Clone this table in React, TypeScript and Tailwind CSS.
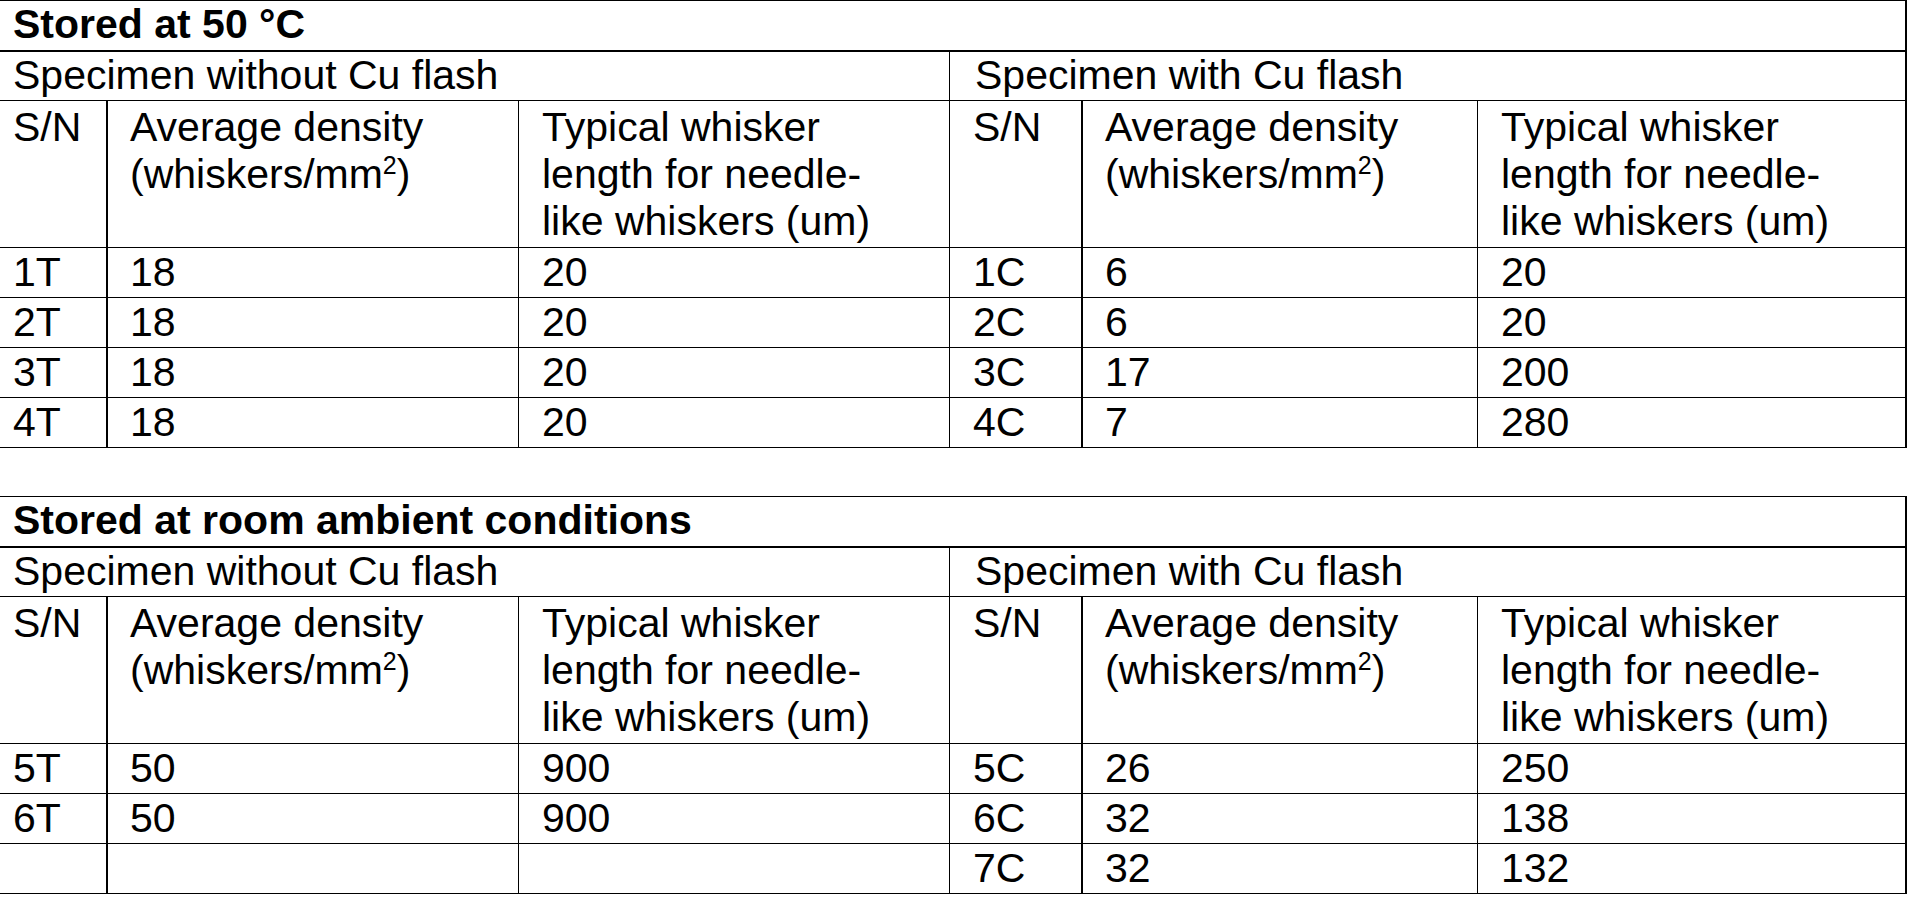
type Row = [string, string, string];

type TableData = {
  title: string;
  plain: Row[];
  flash: Row[];
};

const tables: TableData[] = [
  {
    title: "Stored at 50 °C",
    plain: [
      ["1T", "18", "20"],
      ["2T", "18", "20"],
      ["3T", "18", "20"],
      ["4T", "18", "20"],
    ],
    flash: [
      ["1C", "6", "20"],
      ["2C", "6", "20"],
      ["3C", "17", "200"],
      ["4C", "7", "280"],
    ],
  },
  {
    title: "Stored at room ambient conditions",
    plain: [
      ["5T", "50", "900"],
      ["6T", "50", "900"],
      ["", "", ""],
    ],
    flash: [
      ["5C", "26", "250"],
      ["6C", "32", "138"],
      ["7C", "32", "132"],
    ],
  },
];

// column widths + left borders, left group then right group
const cols = [
  "w-[106px] pl-[13px]",
  "w-[412px] pl-[22px] border-l-2 border-black",
  "w-[431px] pl-[23px] border-l border-black",
  "w-[132px] pl-[23px] border-l border-black",
  "w-[396px] pl-[22px] border-l-2 border-black",
  "w-[428px] pl-[23px] border-l border-black",
];

const HeaderCells = ({ offset }: { offset: number }) => (
  <>
    <div className={`${cols[offset]} h-full pt-[3px]`}>S/N</div>
    <div className={`${cols[offset + 1]} h-full pt-[3px]`}>
      Average density
      <br />
      (whiskers/mm<sup className="text-[25px] -top-[14px]">2</sup>)
    </div>
    <div className={`${cols[offset + 2]} h-full pt-[3px]`}>
      Typical whisker
      <br />
      length for needle-
      <br />
      like whiskers (um)
    </div>
  </>
);

function WhiskerTable({ data }: { data: TableData }) {
  const rows = data.plain.map((r, i) => [...r, ...data.flash[i]]);

  return (
    <div className="w-[1907px] border-t border-r-2 border-black">
      <div className="h-[51px] border-b-2 border-black pl-[13px] font-bold">{data.title}</div>

      <div className="flex h-[49px] border-b border-black">
        <div className="w-[949px] pl-[13px]">Specimen without Cu flash</div>
        <div className="w-[956px] border-l border-black pl-[25px]">Specimen with Cu flash</div>
      </div>

      <div className="flex h-[147px] border-b border-black">
        <HeaderCells offset={0} />
        <HeaderCells offset={3} />
      </div>

      {rows.map((row, i) => (
        <div key={i} className="flex h-[50px] border-b border-black">
          {row.map((cell, j) => (
            <div key={j} className={`${cols[j]} h-full pt-[1px]`}>
              {cell}
            </div>
          ))}
        </div>
      ))}
    </div>
  );
}

export default function App() {
  return (
    <main className="min-h-screen w-full bg-white font-['Liberation_Sans',Arial,sans-serif] text-[41px] leading-[47px] text-black">
      <WhiskerTable data={tables[0]} />
      <div className="mt-[48px]">
        <WhiskerTable data={tables[1]} />
      </div>
    </main>
  );
}
